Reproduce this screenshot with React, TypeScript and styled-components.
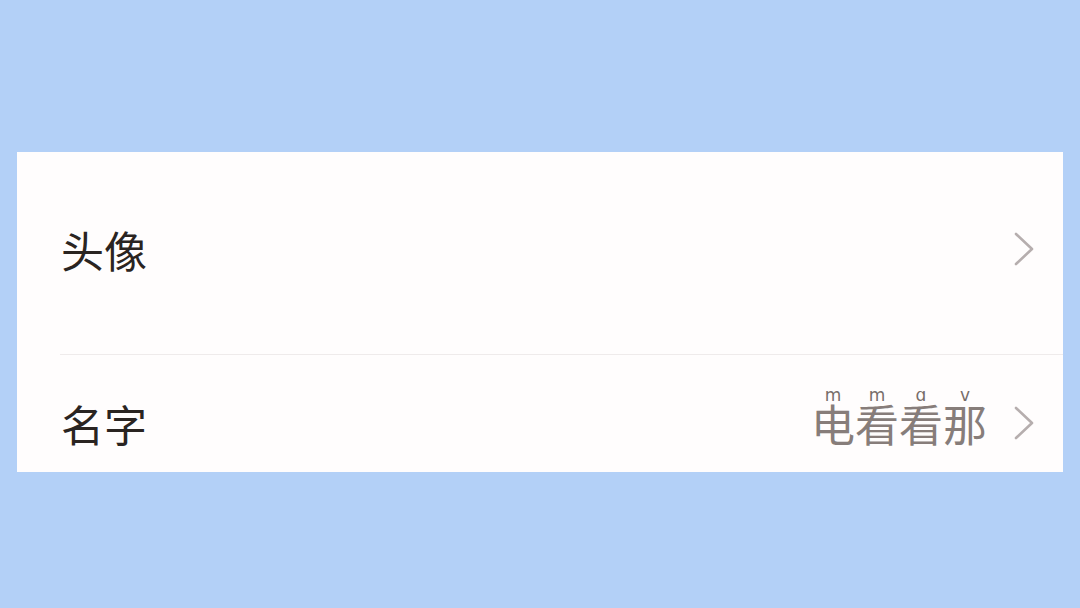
import styled, { createGlobalStyle } from 'styled-components';

const GlobalStyle = createGlobalStyle`
  html, body {
    margin: 0;
    padding: 0;
    background: #b3d0f7;
  }
  body {
    font-family: "Noto Sans CJK SC", "Noto Sans", sans-serif;
  }
`;

const Page = styled.div`
  width: 1080px;
  height: 608px;
  box-sizing: border-box;
  padding: 152px 17px 0;
  background: #b3d0f7;
`;

const Panel = styled.div`
  height: 320px;
  background: #fffdfd;
  overflow: hidden;
  display: flex;
  flex-direction: column;
`;

const Row = styled.div<{ height: number }>`
  height: ${(p) => p.height}px;
  flex-shrink: 0;
  display: flex;
  align-items: center;
  padding: 0 28px 8px 44px;
  box-sizing: border-box;
`;

const Label = styled.span`
  flex: 1;
  font-size: 43px;
  color: #2a2421;
  line-height: 1;
`;

const Value = styled.span`
  display: inline-flex;
  align-items: flex-end;
  padding-bottom: 14px;
  margin-right: 26px;
`;

const Cell = styled.span`
  display: inline-flex;
  flex-direction: column;
  align-items: center;
`;

const Pinyin = styled.span`
  font-family: "DejaVu Sans", sans-serif;
  font-size: 17px;
  line-height: 17px;
  height: 17px;
  margin-bottom: -3px;
  color: #776d6a;
`;

const Char = styled.span`
  font-size: 44px;
  line-height: 1;
  color: #877d7a;
`;

const Divider = styled.div`
  height: 1px;
  margin-left: 43px;
  background: #efebeb;
  flex-shrink: 0;
`;

const Chevron = () => (
  <svg width="22" height="34" viewBox="0 0 22 34" fill="none">
    <path
      d="M3 2 L19 17 L3 32"
      stroke="#b6aeae"
      strokeWidth="2.6"
      strokeLinecap="round"
      strokeLinejoin="round"
    />
  </svg>
);

const nameChars: [string, string][] = [
  ['电', 'm'],
  ['看', 'm'],
  ['看', 'ɑ'],
  ['那', 'v'],
];

export default function App() {
  return (
    <Page>
      <GlobalStyle />
      <Panel>
        <Row height={202}>
          <Label>头像</Label>
          <Chevron />
        </Row>
        <Divider />
        <Row height={144}>
          <Label>名字</Label>
          <Value>
            {nameChars.map(([ch, py], i) => (
              <Cell key={i}>
                <Pinyin>{py}</Pinyin>
                <Char>{ch}</Char>
              </Cell>
            ))}
          </Value>
          <Chevron />
        </Row>
      </Panel>
    </Page>
  );
}
